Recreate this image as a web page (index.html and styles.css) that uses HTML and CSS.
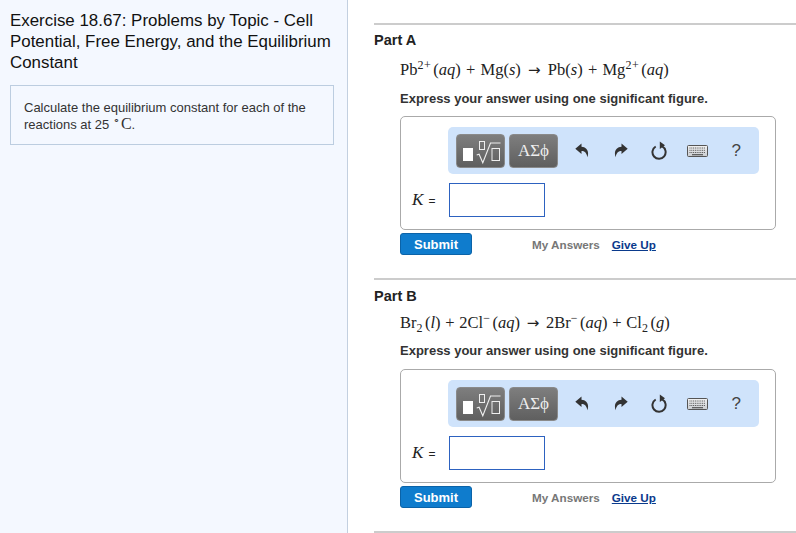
FILE: index.html
```html
<!DOCTYPE html>
<html lang="en">
<head>
<meta charset="utf-8">
<title>Exercise 18.67</title>
<link rel="stylesheet" href="styles.css">
</head>
<body>
<svg class="defs" width="0" height="0" aria-hidden="true">
  <defs>
    <linearGradient id="keys" x1="0" y1="0" x2="0" y2="1"><stop offset="0" stop-color="#f2f2f2"/><stop offset="1" stop-color="#c9ccd0"/></linearGradient>
    <symbol id="i-templates" viewBox="1 1 47 32">
      <rect x="7" y="14" width="10" height="13" fill="#fff"/>
      <rect x="23.500" y="7.500" width="5" height="8" fill="none" stroke="#eee" stroke-width="1"/>
      <path d="M20.700 21l2.400-.8 3.700 8.600 7.700-19.800H44.500" fill="none" stroke="#eee" stroke-width="1.100"/>
      <rect x="36" y="14.500" width="7.500" height="12" fill="none" stroke="#eee" stroke-width="1"/>
    </symbol>
    <symbol id="i-undo" viewBox="0 0 14 15">
      <path d="M6.500 0.500L0.300 5.800l6.200 5.300V7.900c3 0 5 1.400 5.900 6.300C14.500 8.200 11.500 3.900 6.500 3.700z" fill="#333"/>
    </symbol>
    <symbol id="i-reset" viewBox="0 0 16 19">
      <path d="M11.200 5.400a6.600 6.600 0 1 1-6.500.1" fill="none" stroke="#333" stroke-width="2"/>
      <path d="M8.800 0.500v7.600l5.200-3.800z" fill="#333"/>
    </symbol>
    <symbol id="i-keyboard" viewBox="0 0 21 12">
      <rect x="0.500" y="0.500" width="20" height="11" rx="1" fill="url(#keys)" stroke="#555"/>
      <path d="M2.500 3h16M2.500 5.300h16M2.500 7.500h16" stroke="#555" stroke-dasharray="1 .8"/>
      <path d="M5 9.700h11" stroke="#555" stroke-width="1.200"/>
    </symbol>
  </defs>
</svg>
<div class="page">
  <aside class="sidebar">
    <h1 class="title">Exercise 18.67: Problems by Topic - Cell Potential, Free Energy, and the Equilibrium Constant</h1>
    <div class="intro">
      Calculate the equilibrium constant for each of the reactions at 25 <span class="math"><sup class="deg">∘</sup>C</span>.
    </div>
  </aside>
  <main class="main">
    <section class="part part-a">
      <h2 class="part-title">Part A</h2>
      <p class="equation">Pb<sup>2+</sup><span class="after-sup">(<i>aq</i>)</span> + Mg(<i>s</i>) <span class="arrow">→</span> Pb(<i>s</i>) + Mg<sup>2+</sup><span class="after-sup">(<i>aq</i>)</span></p>
      <p class="instruction">Express your answer using one significant figure.</p>
      <div class="answer-box">
        <div class="toolbar">
          <button class="tool-btn" type="button"><svg class="tool-svg"><use href="#i-templates"/></svg></button>
          <button class="tool-btn tool-greek" type="button">ΑΣϕ</button>
          <span class="tool-icon"><svg class="ic-arrow"><use href="#i-undo"/></svg></span>
          <span class="tool-icon"><svg class="ic-arrow flip"><use href="#i-undo"/></svg></span>
          <span class="tool-icon"><svg class="ic-reset"><use href="#i-reset"/></svg></span>
          <span class="tool-icon"><svg class="ic-keyboard"><use href="#i-keyboard"/></svg></span>
          <span class="tool-icon help">?</span>
        </div>
        <div class="answer-row">
          <label class="answer-label"><i>K</i> <span class="eq-sign">=</span></label>
          <span class="answer-input"></span>
        </div>
      </div>
      <div class="actions">
        <button class="submit" type="button">Submit</button>
        <span class="my-answers">My Answers</span>
        <a class="give-up" href="#">Give Up</a>
      </div>
    </section>
    <section class="part part-b">
      <h2 class="part-title">Part B</h2>
      <p class="equation">Br<sub>2</sub><span class="after-sup">(<i>l</i>)</span> + 2Cl<sup>−</sup><span class="after-sup">(<i>aq</i>)</span> <span class="arrow">→</span> 2Br<sup>−</sup><span class="after-sup">(<i>aq</i>)</span> + Cl<sub>2</sub><span class="after-sup">(<i>g</i>)</span></p>
      <p class="instruction">Express your answer using one significant figure.</p>
      <div class="answer-box">
        <div class="toolbar">
          <button class="tool-btn" type="button"><svg class="tool-svg"><use href="#i-templates"/></svg></button>
          <button class="tool-btn tool-greek" type="button">ΑΣϕ</button>
          <span class="tool-icon"><svg class="ic-arrow"><use href="#i-undo"/></svg></span>
          <span class="tool-icon"><svg class="ic-arrow flip"><use href="#i-undo"/></svg></span>
          <span class="tool-icon"><svg class="ic-reset"><use href="#i-reset"/></svg></span>
          <span class="tool-icon"><svg class="ic-keyboard"><use href="#i-keyboard"/></svg></span>
          <span class="tool-icon help">?</span>
        </div>
        <div class="answer-row">
          <label class="answer-label"><i>K</i> <span class="eq-sign">=</span></label>
          <span class="answer-input"></span>
        </div>
      </div>
      <div class="actions">
        <button class="submit" type="button">Submit</button>
        <span class="my-answers">My Answers</span>
        <a class="give-up" href="#">Give Up</a>
      </div>
    </section>
    <div class="end-rule"></div>
  </main>
</div>
</body>
</html>
```

FILE: styles.css
```css
* { box-sizing: border-box; }
html, body { margin: 0; height: 100%; overflow: hidden; background: #fff; }
body { font-family: "Liberation Sans", Arial, sans-serif; color: #222; }
.defs { position: absolute; }

.page { display: flex; height: 533px; }

.sidebar {
  flex: 0 0 348px;
  padding: 10px 13px 0 10px;
  background: #f4f8ff;
  border-right: 1px solid #c3d0e0;
}
.title {
  margin: 0 0 12px;
  font-size: 16.900px;
  line-height: 21px;
  font-weight: 400;
  color: #111;
}
.intro {
  height: 60px;
  padding: 14px 12px 0 13px;
  border: 1px solid #bccde0;
  font-size: 13px;
  line-height: 16px;
  color: #333;
}
.math { font-family: "Liberation Serif", serif; font-size: 16px; }
.deg { font-size: 11px; line-height: 0; vertical-align: 5px; margin: 0 1px 0 0; }

.main { flex: 1; padding: 23px 0 0 26px; min-width: 0; }

.part { border-top: 2px solid #ccc; }
.part-a { height: 255px; padding-top: 7px; }
.part-b { height: 253px; padding-top: 8px; }
.end-rule { border-top: 2px solid #ccc; }

.part-title {
  margin: 0;
  font-size: 14.500px;
  line-height: 16px;
  font-weight: 700;
  color: #222;
}
.equation {
  margin: 0 0 0 26px;
  font-family: "Liberation Serif", serif;
  font-size: 16.500px;
  line-height: 20px;
  color: #222;
  white-space: nowrap;
}
.part-a .equation { margin-top: 12px; word-spacing: 1.100px; }
.part-b .equation { margin-top: 9px; word-spacing: 0.600px; }
.equation sup, .equation sub { font-size: 12px; line-height: 0; letter-spacing: 0.500px; }
.after-sup { margin-left: 2px; }
.arrow { font-family: "DejaVu Sans", sans-serif; font-size: 15px; line-height: 0; margin: 0 2px; }

.instruction {
  margin: 0 0 0 26px;
  font-size: 13px;
  line-height: 16px;
  font-weight: 700;
  color: #333;
}
.part-a .instruction { margin-top: 11px; }
.part-b .instruction { margin-top: 10px; }

.answer-box {
  width: 376px;
  height: 114px;
  margin-left: 26px;
  padding: 10px 16px 0 47px;
  border: 1px solid #aaa;
  border-radius: 5px;
}
.part-a .answer-box { margin-top: 9px; }
.part-b .answer-box { margin-top: 10px; }

.toolbar {
  display: flex;
  align-items: center;
  width: 311px;
  height: 47px;
  padding-left: 8px;
  background: #cfe3fb;
  border-radius: 5px;
}
.tool-btn {
  flex: 0 0 49px;
  height: 34px;
  margin: 0 4px 0 0;
  padding: 0;
  border: 1px solid #8a8a8a;
  border-radius: 4px;
  background: linear-gradient(#7e7e7e, #5f5f5f);
  color: #eee;
  display: flex;
  align-items: center;
  justify-content: center;
}
.tool-svg { width: 47px; height: 32px; display: block; }
.tool-greek { font-family: "Liberation Serif", serif; font-size: 17px; margin-right: 0; }
.tool-icon {
  flex: 0 0 38.500px;
  display: flex;
  align-items: center;
  justify-content: center;
  height: 34px;
  color: #444;
}
.tool-icon:nth-child(3) { margin-left: 5px; }
.ic-arrow { width: 14px; height: 15px; display: block; }
.flip { transform: scaleX(-1); }
.ic-reset { width: 16px; height: 19px; display: block; }
.ic-keyboard { width: 21px; height: 12px; display: block; }
.help { font-size: 17px; }

.answer-row { display: flex; align-items: center; margin: 9px 0 0 -36px; }
.answer-label {
  width: 37px;
  font-family: "Liberation Serif", serif;
  font-size: 17px;
  color: #222;
  white-space: nowrap;
}
.eq-sign { font-family: "Liberation Sans", sans-serif; font-size: 12px; margin-left: 1px; }
.answer-input {
  display: block;
  width: 96px;
  height: 34px;
  background: #fff;
  border: 1px solid #2d62c0;
}

.actions { display: flex; align-items: center; margin: 3px 0 0 26px; height: 22px; }
.submit {
  width: 72px;
  height: 22px;
  padding: 0;
  background: #0f7ccd;
  border: 1px solid #0b63a8;
  border-radius: 3px;
  color: #fff;
  font-family: inherit;
  font-size: 13px;
  font-weight: 700;
}
.my-answers { margin-left: 60px; font-size: 11.700px; font-weight: 700; color: #777; }
.give-up { margin-left: 12px; font-size: 11.700px; font-weight: 700; color: #0a3a8c; }
```
